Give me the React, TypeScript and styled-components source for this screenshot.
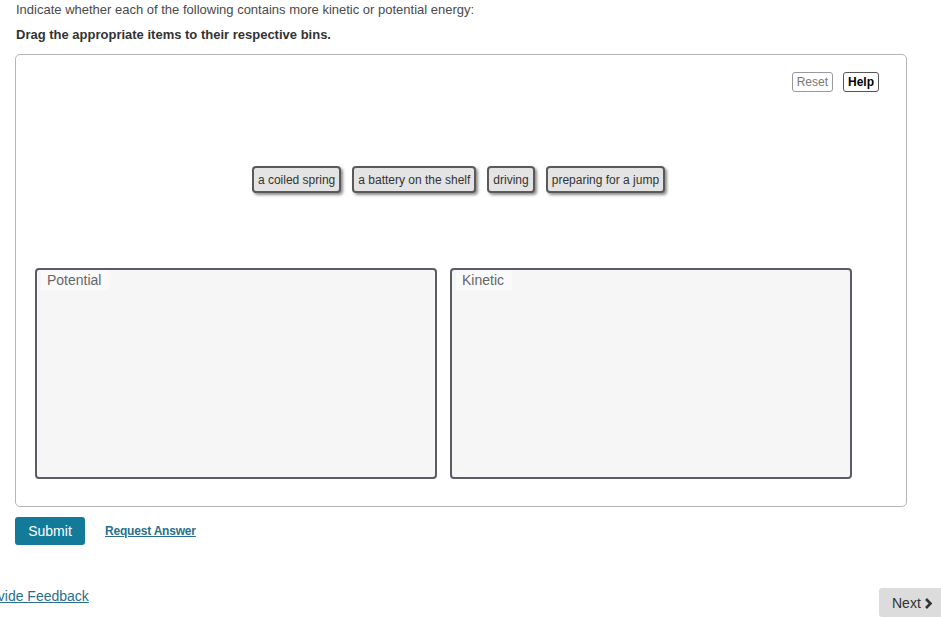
import React from "react";
import styled, { createGlobalStyle } from "styled-components";

const Global = createGlobalStyle`
  html, body { margin: 0; padding: 0; background: #fff; overflow: hidden; }
  body { font-family: "Liberation Sans", Arial, sans-serif; width: 941px; height: 617px; }
`;

const Page = styled.div`
  width: 941px;
  height: 617px;
  display: flex;
  flex-direction: column;
`;

const Content = styled.div`
  padding: 2px 0 0 15px;
  width: 892px;
  display: flex;
  flex-direction: column;
`;

const Prompt = styled.p`
  margin: 0 0 0 1px;
  font-size: 13px;
  line-height: 16px;
  color: #4a4a4a;
`;

const Instruction = styled.p`
  margin: 9px 0 0 1px;
  font-size: 13px;
  line-height: 16px;
  font-weight: bold;
  color: #333;
`;

const Board = styled.div`
  box-sizing: border-box;
  margin-top: 11px;
  height: 453px;
  border: 1px solid #b5b5b5;
  border-radius: 5px;
  display: flex;
  flex-direction: column;
  padding: 17px 27px 0 19px;
`;

const Toolbar = styled.div`
  display: flex;
  justify-content: flex-end;
  gap: 10px;
`;

const ToolButton = styled.button<{ $strong?: boolean }>`
  font-family: "Liberation Sans", Arial, sans-serif;
  font-size: 12px;
  height: 20px;
  padding: 0 4px;
  background: #fff;
  border-radius: 3px;
  border: 1px solid ${(p) => (p.$strong ? "#555" : "#999")};
  color: ${(p) => (p.$strong ? "#000" : "#777")};
  font-weight: ${(p) => (p.$strong ? "bold" : "normal")};
`;

const Tray = styled.div`
  margin-top: 74px;
  display: flex;
  justify-content: center;
  gap: 11px;
  padding-left: 3px;
`;

const Item = styled.div`
  height: 27px;
  box-sizing: border-box;
  padding: 0 4px;
  display: flex;
  align-items: center;
  font-size: 12px;
  color: #333;
  background: #e4e4e4;
  border: 2px solid #5a5a5a;
  border-radius: 4px;
  box-shadow: 2px 2px 3px rgba(0, 0, 0, 0.45);
`;

const Bins = styled.div`
  margin-top: 75px;
  display: flex;
  gap: 13px;
`;

const Bin = styled.div`
  width: 402px;
  height: 211px;
  box-sizing: border-box;
  background: #f6f6f6;
  border: 2px solid #5c5c66;
  border-radius: 4px;
  padding: 0 0 0 4px;
`;

const BinLabel = styled.div`
  display: inline-block;
  background: #fafafa;
  color: #666;
  font-size: 14px;
  line-height: 20px;
  padding: 0 8px 0 6px;
`;

const Actions = styled.div`
  margin-top: 10px;
  display: flex;
  align-items: center;
  gap: 20px;
`;

const Submit = styled.button`
  width: 70px;
  height: 28px;
  border: none;
  border-radius: 3px;
  background: #137b9a;
  color: #fff;
  font-family: "Liberation Sans", Arial, sans-serif;
  font-size: 14px;
  padding: 0;
`;

const RequestLink = styled.a`
  font-size: 12px;
  letter-spacing: -0.2px;
  font-weight: bold;
  color: #2a6f8c;
  text-decoration: underline;
`;

const Footer = styled.div`
  margin-top: 43px;
  display: flex;
  justify-content: space-between;
  align-items: flex-start;
`;

const FeedbackLink = styled.a`
  margin-left: -24px;
  font-size: 14px;
  line-height: 16px;
  color: #2a6f8c;
  text-decoration: underline;
`;

const NextButton = styled.button`
  width: 64px;
  height: 29px;
  margin-right: -2px;
  border: none;
  border-radius: 3px;
  background: #dcdcdc;
  color: #333;
  font-family: "Liberation Sans", Arial, sans-serif;
  font-size: 14px;
  display: flex;
  align-items: center;
  gap: 3px;
  padding: 1px 0 0 13px;
`;

const items = ["a coiled spring", "a battery on the shelf", "driving", "preparing for a jump"];

export default function App() {
  return (
    <Page>
      <Global />
      <Content>
        <Prompt>Indicate whether each of the following contains more kinetic or potential energy:</Prompt>
        <Instruction>Drag the appropriate items to their respective bins.</Instruction>
        <Board>
          <Toolbar>
            <ToolButton>Reset</ToolButton>
            <ToolButton $strong>Help</ToolButton>
          </Toolbar>
          <Tray>
            {items.map((t) => (
              <Item key={t}>{t}</Item>
            ))}
          </Tray>
          <Bins>
            <Bin>
              <BinLabel>Potential</BinLabel>
            </Bin>
            <Bin>
              <BinLabel>Kinetic</BinLabel>
            </Bin>
          </Bins>
        </Board>
        <Actions>
          <Submit>Submit</Submit>
          <RequestLink>Request Answer</RequestLink>
        </Actions>
      </Content>
      <Footer>
        <FeedbackLink>Provide Feedback</FeedbackLink>
        <NextButton>
          Next
          <svg width="9" height="11" viewBox="0 0 9 11">
            <path d="M2 1 L6.5 5.5 L2 10" fill="none" stroke="#333" strokeWidth="2.6" />
          </svg>
        </NextButton>
      </Footer>
    </Page>
  );
}
